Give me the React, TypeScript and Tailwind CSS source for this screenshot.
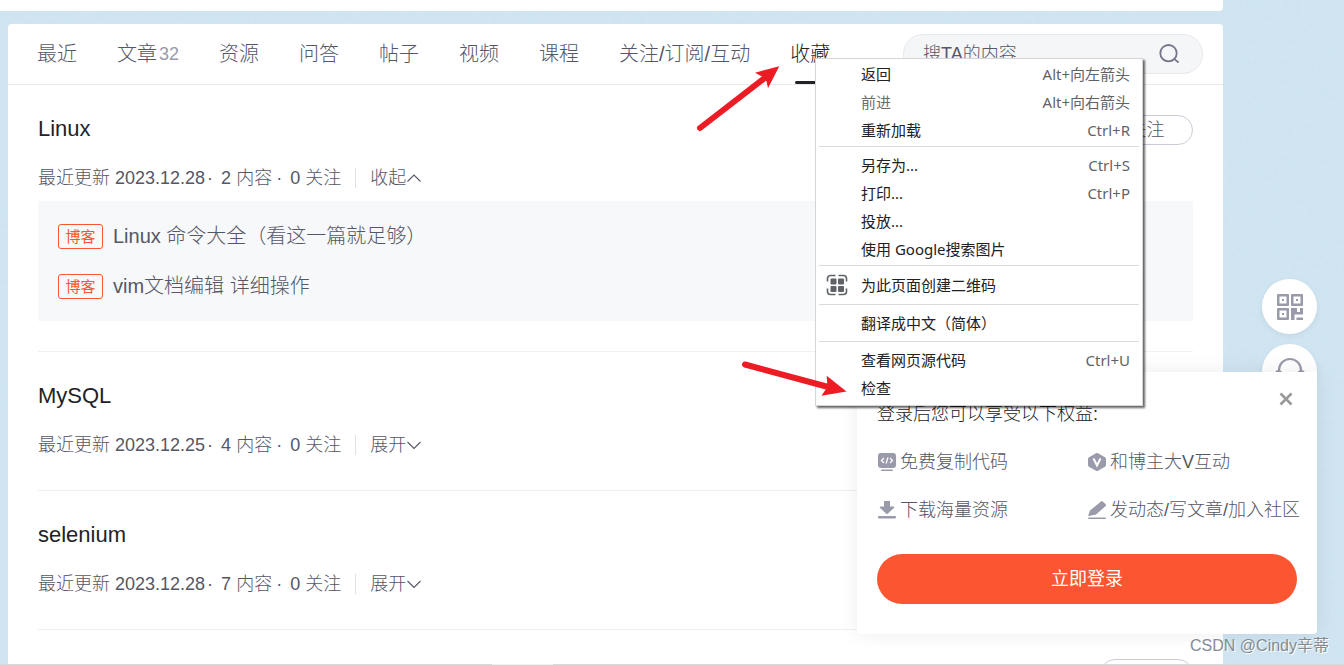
import type { ReactNode } from "react";

const tabs = ["最近", "文章", "资源", "问答", "帖子", "视频", "课程", "关注/订阅/互动", "收藏"];

type Folder = {
  name: string;
  updated: string;
  count: number;
  posts?: string[];
};

const folders: Folder[] = [
  {
    name: "Linux",
    updated: "2023.12.28",
    count: 2,
    posts: ["Linux 命令大全（看这一篇就足够）", "vim文档编辑 详细操作"],
  },
  { name: "MySQL", updated: "2023.12.25", count: 4 },
  { name: "selenium", updated: "2023.12.28", count: 7 },
];

function Texture() {
  return (
    <svg className="absolute inset-0 h-full w-full opacity-50" aria-hidden="true">
      <filter id="paper">
        <feTurbulence type="fractalNoise" baseFrequency="0.14 0.2" numOctaves="3" seed="4" />
        <feColorMatrix values="0 0 0 0 0.66  0 0 0 0 0.8  0 0 0 0 0.89  1.6 0 0 0 -0.6" />
      </filter>
      <rect width="100%" height="100%" filter="url(#paper)" />
    </svg>
  );
}

function SearchIcon() {
  return (
    <svg viewBox="0 0 20 20" className="h-5 w-5" fill="none" stroke="#77768c" strokeWidth="1.8" strokeLinecap="round">
      <circle cx="9.5" cy="9.2" r="8.2" />
      <path d="M16 15.600 19 18" />
    </svg>
  );
}

function TabBar() {
  return (
    <header className="flex h-[61px] items-center justify-between border-b border-[#e8e8ed] pr-5 pl-[29px]">
      <nav className="flex h-full gap-10 text-xl text-[#555666]">
        {tabs.map((tab) => (
          <a
            key={tab}
            href="#"
            className={
              tab === "收藏"
                ? "relative flex items-center whitespace-nowrap text-[#222226]"
                : "flex items-center whitespace-nowrap"
            }
          >
            {tab}
            {tab === "文章" && <span className="ml-0.5 text-lg text-[#999aaa]">32</span>}
            {tab === "收藏" && (
              <span className="absolute bottom-0 left-[5px] h-[3px] w-[30px] rounded-full bg-[#222226]" />
            )}
          </a>
        ))}
      </nav>
      <form className="flex h-10 w-[300px] items-center rounded-full border border-[#e8e8ed] bg-[#f5f6f7] pr-[23px] pl-[19px]">
        <input
          aria-label="搜TA的内容"
          placeholder="搜TA的内容"
          className="min-w-0 flex-1 bg-transparent text-lg outline-none placeholder:text-[#555666]"
        />
        <button type="button" aria-label="搜索">
          <SearchIcon />
        </button>
      </form>
    </header>
  );
}

function FolderSection({ folder }: { folder: Folder }) {
  const open = Boolean(folder.posts);
  return (
    <section className="mx-[30px] border-b border-[#f0f0f2] py-[30px]">
      <div className="flex h-7 items-start justify-between">
        <h2 className="text-[22px] leading-7 text-[#222226]">{folder.name}</h2>
        <button className="h-[30px] w-[93px] rounded-full border border-[#ccccd8] text-lg leading-7 text-[#555666]">
          关注
        </button>
      </div>
      <div className="mt-5 flex h-[30px] items-center text-lg text-[#555666]">
        <span className="whitespace-pre">最近更新 {folder.updated}</span>
        <span className="ml-0.5">·</span>
        <span className="ml-2">{folder.count} 内容</span>
        <span className="ml-1">·</span>
        <span className="ml-2">0 关注</span>
        <span className="mx-3.5 h-5 w-px bg-[#e0e0e6]" />
        <button className="flex items-center">
          {open ? "收起" : "展开"}
          <svg viewBox="0 0 16 16" className="h-4 w-4" fill="none" stroke="#555666" strokeWidth="1.1">
            <path d={open ? "M1.5 11.5 8 5l6.500 6.500" : "M1.500 5 8 11.500 14.500 5"} />
          </svg>
        </button>
      </div>
      {folder.posts && (
        <ul className="mt-2 bg-[#f7f8fa] px-5 py-2.5">
          {folder.posts.map((post) => (
            <li key={post} className="flex h-[50px] items-center gap-2.5 text-xl text-[#555666]">
              <span className="flex h-[25px] w-[45px] items-center justify-center rounded-[3px] border border-[#fc5531] text-[15px] font-normal text-[#fc5531]">
                博客
              </span>
              <a href="#">{post}</a>
            </li>
          ))}
        </ul>
      )}
    </section>
  );
}

type Entry = { label: string; keys?: string; muted?: boolean; icon?: ReactNode };

function QrMenuIcon() {
  return (
    <svg viewBox="0 0 22 22" className="h-[22px] w-[22px]">
      <g fill="none" stroke="#5f6368" strokeWidth="1.600">
        <path d="M1.500 7.500V4.500a3 3 0 0 1 3-3h5M12.500 1.500h5a3 3 0 0 1 3 3v3M20.500 14.500v3a3 3 0 0 1-3 3h-5M9.500 20.500h-5a3 3 0 0 1-3-3v-3" />
      </g>
      <g fill="#5f6368">
        <rect x="4.500" y="4.500" width="6" height="6" rx="1" />
        <rect x="12" y="4.500" width="6" height="6" rx="1" />
        <rect x="4.500" y="12" width="6" height="6" rx="1" />
        <rect x="12" y="12" width="6" height="6" rx="1" />
      </g>
    </svg>
  );
}

const menu: { pad: string; items: Entry[] }[] = [
  {
    pad: "pt-px pb-0.5",
    items: [
      { label: "返回", keys: "Alt+向左箭头" },
      { label: "前进", keys: "Alt+向右箭头", muted: true },
      { label: "重新加载", keys: "Ctrl+R" },
    ],
  },
  {
    pad: "border-t pt-1 pb-0.5",
    items: [
      { label: "另存为...", keys: "Ctrl+S" },
      { label: "打印...", keys: "Ctrl+P" },
      { label: "投放..." },
      { label: "使用 Google搜索图片" },
    ],
  },
  { pad: "border-t py-[5px]", items: [{ label: "为此页面创建二维码", icon: <QrMenuIcon /> }] },
  { pad: "border-t py-1", items: [{ label: "翻译成中文（简体）" }] },
  { pad: "border-t pt-1 pb-[3px]", items: [{ label: "查看网页源代码", keys: "Ctrl+U" }, { label: "检查" }] },
];

function ContextMenu() {
  return (
    <div
      role="menu"
      className="absolute top-[58px] right-[201px] w-[328px] border border-[#d4d5d9] bg-white px-[3px] font-['Noto_Sans','Noto_Sans_CJK_SC',sans-serif] text-[15px] font-normal shadow-[2px_2px_2px_rgba(0,0,0,0.6)]"
    >
      {menu.map((group) => (
        <div key={group.items[0].label} className={`border-[#d9dadd] ${group.pad}`}>
          {group.items.map((item) => (
            <button
              key={item.label}
              role="menuitem"
              className={
                item.muted
                  ? "flex h-7 w-full items-center pr-[9px] pl-[7px] text-[#6b6b70]"
                  : "flex h-7 w-full items-center pr-[9px] pl-[7px] text-[#202124]"
              }
            >
              <span className="w-[35px]">{item.icon}</span>
              <span>{item.label}</span>
              <span className="ml-auto text-[#5f6368]">{item.keys}</span>
            </button>
          ))}
        </div>
      ))}
    </div>
  );
}

function FloatingTools() {
  return (
    <div className="absolute top-[279px] right-[27px] flex flex-col gap-2.5">
      <button aria-label="二维码" className="flex h-[55px] w-[55px] items-center justify-center rounded-full bg-white shadow-[0_2px_6px_rgba(0,0,0,0.06)]">
        <svg viewBox="0 0 26 26" className="h-[26px] w-[26px]" fill="#999aaa">
          <path fillRule="evenodd" d="M1 0h10a1 1 0 0 1 1 1v10a1 1 0 0 1-1 1H1a1 1 0 0 1-1-1V1a1 1 0 0 1 1-1zM2.500 2.500v7h7v-7zM5 5h2v2H5z" />
          <path fillRule="evenodd" d="M15 0h10a1 1 0 0 1 1 1v10a1 1 0 0 1-1 1H15a1 1 0 0 1-1-1V1a1 1 0 0 1 1-1zM16.500 2.500v7h7v-7zM19 5h2v2h-2z" />
          <path fillRule="evenodd" d="M1 14h10a1 1 0 0 1 1 1v10a1 1 0 0 1-1 1H1a1 1 0 0 1-1-1V15a1 1 0 0 1 1-1zM2.500 16.500v7h7v-7zM5 19h2v2H5z" />
          <path d="M14 14h6v4h3v-4h3v6.500h-8.500V26H14zM19.500 23.500H26V26h-6.500z" />
        </svg>
      </button>
      <button aria-label="客服" className="flex h-[55px] w-[55px] items-center justify-center rounded-full bg-white shadow-[0_2px_6px_rgba(0,0,0,0.06)]">
        <svg viewBox="0 0 30 30" className="h-[30px] w-[30px]" fill="none" stroke="#999aaa" strokeWidth="2.200">
          <path d="M4 14.500V13a11 11 0 0 1 22 0v1.500" />
          <rect x="1.200" y="14" width="5" height="8" rx="2.500" />
          <rect x="23.800" y="14" width="5" height="8" rx="2.500" />
        </svg>
      </button>
    </div>
  );
}

const benefits: { label: string; icon: ReactNode }[] = [
  {
    label: "免费复制代码",
    icon: (
      <>
        <rect width="18" height="15" rx="3" />
        <rect x="3" y="16.500" width="12" height="1.500" rx=".7" />
        <path d="M6 5 3.500 7.500 6 10M12 5l2.500 2.500L12 10M10 4.500l-2 6" fill="none" stroke="#fff" strokeWidth="1.300" />
      </>
    ),
  },
  {
    label: "和博主大V互动",
    icon: (
      <>
        <path d="M8 .3a2 2 0 0 1 2 0l7 3.900a2 2 0 0 1 1 1.700v6.200a2 2 0 0 1-1 1.700l-7 3.900a2 2 0 0 1-2 0l-7-3.900a2 2 0 0 1-1-1.700V5.900a2 2 0 0 1 1-1.700z" />
        <path d="M5.500 5.500 9 12.500l3.500-7" fill="none" stroke="#fff" strokeWidth="2" />
      </>
    ),
  },
  {
    label: "下载海量资源",
    icon: (
      <>
        <path d="M6 0h6v5.500h3.500a.8.8 0 0 1 .5 1.400L9.700 12.800a1 1 0 0 1-1.400 0L2 6.900a.8.8 0 0 1 .5-1.400H6z" />
        <rect y="15" width="18" height="2.500" rx="1" />
      </>
    ),
  },
  {
    label: "发动态/写文章/加入社区",
    icon: (
      <>
        <path d="M13 .5a1.200 1.200 0 0 1 1.700 0l3 2.800a1.200 1.200 0 0 1 0 1.700L8 13.500 1 15a.6.6 0 0 1-.7-.8L2 9.500z" />
        <rect y="16.500" width="18" height="1.500" rx=".7" />
      </>
    ),
  },
];

function LoginPanel() {
  return (
    <aside className="absolute top-[372px] right-[27px] w-[460px] rounded bg-white px-5 pt-7 pb-[30px] shadow-[0_0_20px_rgba(0,0,0,0.08)]">
      <button aria-label="关闭" className="absolute top-5 right-6">
        <svg viewBox="0 0 14 14" className="h-3.5 w-3.5" fill="none" stroke="#999" strokeWidth="2.600">
          <path d="m1.500 1.500 11 11M12.500 1.500l-11 11" />
        </svg>
      </button>
      <h3 className="text-lg leading-7 text-[#222226]">登录后您可以享受以下权益:</h3>
      <ul className="mt-2.5 grid grid-cols-2">
        {benefits.map((benefit) => (
          <li key={benefit.label} className="flex h-12 items-center gap-1 pl-px text-lg whitespace-nowrap text-[#555666]">
            <svg viewBox="0 0 18 18" className="h-[18px] w-[18px] shrink-0" fill="#999aaa">
              {benefit.icon}
            </svg>
            {benefit.label}
          </li>
        ))}
      </ul>
      <button className="mt-5 h-[50px] w-full rounded-full bg-[#fc5531] text-lg font-normal text-white">立即登录</button>
    </aside>
  );
}

function Arrows() {
  return (
    <svg className="pointer-events-none absolute top-0 right-0 h-[420px] w-[664px]" viewBox="680 0 664 420" fill="#ed1c24" aria-hidden="true">
      <path d="M700 128 766 77M745 364.500 832 388" stroke="#ed1c24" strokeWidth="6" strokeLinecap="round" />
      <path d="M779.300 66.300 755 72.700l7.500 4 4 4.500 1.500 7z" />
      <path d="m846.500 391.500-19.800-15.800.5 8.300-1.200 5-4.500 6.800z" />
    </svg>
  );
}

export default function App() {
  return (
    <div className="relative h-screen overflow-hidden bg-[#cfe4f1] font-['Liberation_Sans','Noto_Sans_CJK_SC',sans-serif] font-light">
      <Texture />
      <div className="relative mr-[121px] flex h-full flex-col">
        <div className="h-[11px] shrink-0 rounded-br bg-white" />
        <main className="mt-[13px] ml-2 flex-1 rounded-t bg-white">
          <TabBar />
          {folders.map((folder) => (
            <FolderSection key={folder.name} folder={folder} />
          ))}
          <section className="mx-[30px] flex justify-end pt-[29px]">
            <button aria-label="关注" className="h-[30px] w-[93px] rounded-full border border-[#ccccd8]" />
          </section>
        </main>
      </div>
      <FloatingTools />
      <LoginPanel />
      <ContextMenu />
      <Arrows />
      <p className="absolute right-[15px] bottom-2 text-base leading-[22px] font-normal text-[#858b91] [text-shadow:1px_1px_0_#fff]">
        CSDN @Cindy辛蒂
      </p>
      <div className="absolute inset-x-0 bottom-0 flex h-px">
        <span className="w-[492px] bg-[#d9d9d9]" />
        <span className="w-[61px] bg-[#f0f0f0]" />
        <span className="flex-1 bg-[#d9d9d9]" />
      </div>
    </div>
  );
}
